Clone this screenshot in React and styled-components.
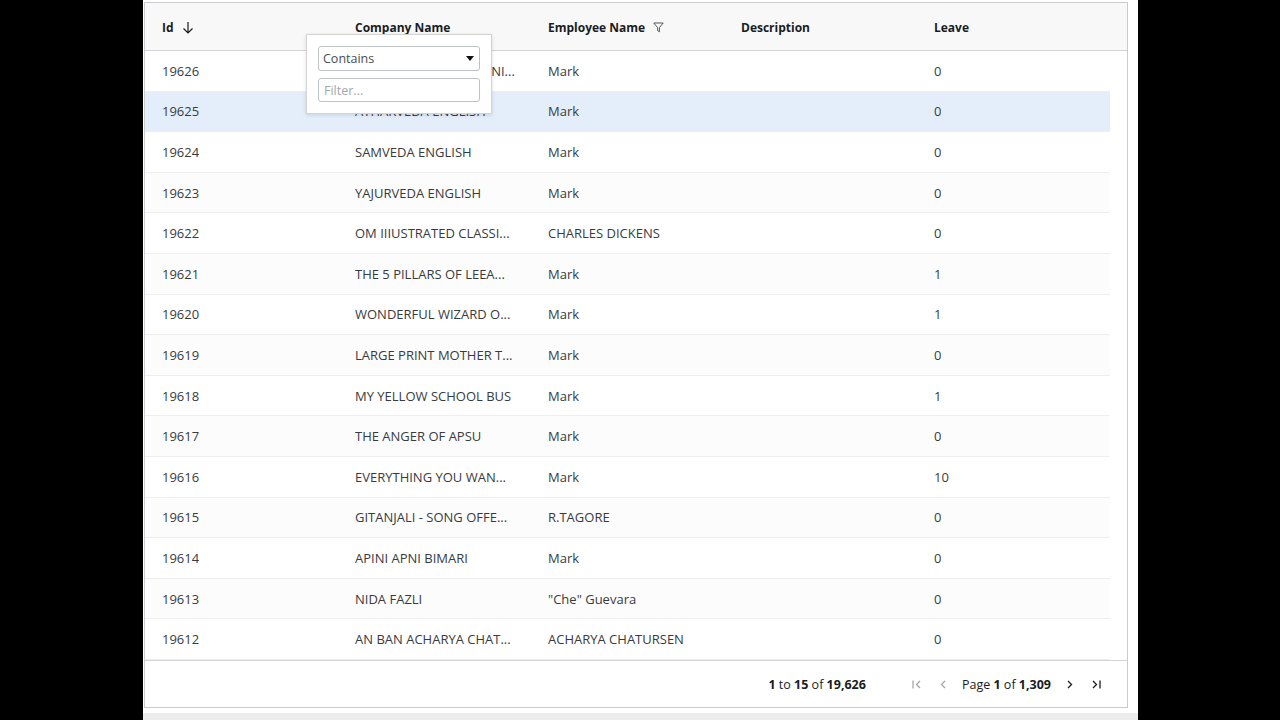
import React from "react";
import styled, { createGlobalStyle } from "styled-components";

const rows = [
  { id: 19626, company: "RIGVEDA SANSKRIT BANI...", employee: "Mark", leave: 0 },
  { id: 19625, company: "ATHARVEDA ENGLISH", employee: "Mark", leave: 0 },
  { id: 19624, company: "SAMVEDA ENGLISH", employee: "Mark", leave: 0 },
  { id: 19623, company: "YAJURVEDA ENGLISH", employee: "Mark", leave: 0 },
  { id: 19622, company: "OM IIIUSTRATED CLASSI...", employee: "CHARLES DICKENS", leave: 0 },
  { id: 19621, company: "THE 5 PILLARS OF LEEA...", employee: "Mark", leave: 1 },
  { id: 19620, company: "WONDERFUL WIZARD O...", employee: "Mark", leave: 1 },
  { id: 19619, company: "LARGE PRINT MOTHER T...", employee: "Mark", leave: 0 },
  { id: 19618, company: "MY YELLOW SCHOOL BUS", employee: "Mark", leave: 1 },
  { id: 19617, company: "THE ANGER OF APSU", employee: "Mark", leave: 0 },
  { id: 19616, company: "EVERYTHING YOU WAN...", employee: "Mark", leave: 10 },
  { id: 19615, company: "GITANJALI - SONG OFFE...", employee: "R.TAGORE", leave: 0 },
  { id: 19614, company: "APINI APNI BIMARI", employee: "Mark", leave: 0 },
  { id: 19613, company: "NIDA FAZLI", employee: "\"Che\" Guevara", leave: 0 },
  { id: 19612, company: "AN BAN ACHARYA CHAT...", employee: "ACHARYA CHATURSEN", leave: 0 },
];

const GlobalStyle = createGlobalStyle`
  html, body {
    margin: 0;
    padding: 0;
    background: #000;
    font-family: "Open Sans", "Liberation Sans", sans-serif;
  }
`;

const Sheet = styled.div`
  box-sizing: border-box;
  width: 995px;
  height: 720px;
  margin-left: 143px;
  padding: 2px 10px 0 1px;
  background: #fff;
  display: flex;
  flex-direction: column;
`;

const Grid = styled.div`
  position: relative;
  box-sizing: border-box;
  height: 706px;
  border: 1px solid #c9cbce;
  display: flex;
  flex-direction: column;
`;

const Header = styled.div`
  display: flex;
  height: 47px;
  flex-shrink: 0;
  background: #f8f8f8;
  border-bottom: 1px solid #d2d4d7;
`;

const HeaderCell = styled.div`
  box-sizing: border-box;
  width: 193px;
  padding: 2px 0 0 17px;
  display: flex;
  align-items: center;
  gap: 8px;
  font-size: 12px;
  font-weight: 700;
  color: #181d1f;
`;

const Body = styled.div`
  flex: 1;
  display: flex;
  flex-direction: column;
  padding-right: 17px;
`;

const Row = styled.div`
  display: flex;
  height: 40.6px;
  box-sizing: border-box;
  border-bottom: 1px solid #eeeeee;
  background: ${(p) => (p.$hover ? "#e3eefa" : p.$odd ? "#fcfcfc" : "#fff")};
`;

const Cell = styled.div`
  box-sizing: border-box;
  width: 193px;
  padding: 0 8px 0 17px;
  display: flex;
  align-items: center;
  font-size: 13px;
  color: #383b3e;
  white-space: nowrap;
  overflow: hidden;

  span {
    overflow: hidden;
    text-overflow: ellipsis;
  }
`;

const Footer = styled.div`
  height: 46px;
  flex-shrink: 0;
  border-top: 1px solid #d2d4d7;
  display: flex;
  align-items: center;
  justify-content: flex-end;
  padding-right: 24px;
  font-size: 12.5px;
  color: #181d1f;
`;

const Summary = styled.div`
  margin-right: 44px;
  b {
    font-weight: 700;
  }
`;

const PageNav = styled.div`
  display: flex;
  align-items: center;
  gap: 12px;
  b {
    font-weight: 700;
  }
`;

const NavButton = styled.span`
  display: inline-flex;
  width: 14px;
  justify-content: center;
  color: ${(p) => (p.$disabled ? "#a3a6a8" : "#181d1f")};
`;

const Strip = styled.div`
  margin-top: auto;
  height: 7px;
  margin-left: -1px;
  margin-right: -10px;
  background: #ececec;
`;

const FilterMenu = styled.div`
  position: absolute;
  left: 161px;
  top: 31px;
  box-sizing: border-box;
  width: 186px;
  height: 80px;
  padding: 11px 11px 0;
  background: #fff;
  border: 1px solid #d3d3d3;
  box-shadow: 0 1px 4px rgba(0, 0, 0, 0.12);
  display: flex;
  flex-direction: column;
  gap: 7px;
`;

const Select = styled.div`
  box-sizing: border-box;
  height: 25px;
  border: 1px solid #bfc2c5;
  border-radius: 3px;
  display: flex;
  align-items: center;
  justify-content: space-between;
  padding: 0 5px 0 4px;
  font-size: 12.5px;
  color: #4a4d50;
`;

const Caret = styled.span`
  width: 0;
  height: 0;
  border-left: 4px solid transparent;
  border-right: 4px solid transparent;
  border-top: 5px solid #111;
`;

const FilterInput = styled.input`
  box-sizing: border-box;
  height: 24px;
  border: 1px solid #bfc2c5;
  border-radius: 3px;
  padding: 0 5px;
  font-family: inherit;
  font-size: 12.5px;
  color: #333;
  outline: none;

  &::placeholder {
    color: #a4a7aa;
  }
`;

const SortDown = () => (
  <svg width="12" height="13" viewBox="0 0 12 13" fill="none" stroke="#181d1f" strokeWidth="1.2">
    <path d="M6 1v11M1.5 7.5L6 12l4.5-4.5" />
  </svg>
);

const Funnel = () => (
  <svg width="11" height="11" viewBox="0 0 11 11" fill="none" stroke="#555" strokeWidth="1">
    <path d="M0.8 1h9.4L6.4 5.6v4.2L4.6 8.6V5.6z" />
  </svg>
);

const Chevron = ({ dir = "right", bar = false }) => (
  <svg width="10" height="11" viewBox="0 0 10 11" fill="none" stroke="currentColor" strokeWidth="1.3">
    {dir === "left" ? (
      <>
        {bar && <path d="M1 1.5v8" />}
        <path d={bar ? "M8 2L4.5 5.5 8 9" : "M7 2L3.5 5.5 7 9"} />
      </>
    ) : (
      <>
        <path d={bar ? "M2 2l3.5 3.5L2 9" : "M3 2l3.5 3.5L3 9"} />
        {bar && <path d="M9 1.5v8" />}
      </>
    )}
  </svg>
);

const App = () => (
  <>
    <GlobalStyle />
    <Sheet>
      <Grid>
        <Header>
          <HeaderCell>
            Id <SortDown />
          </HeaderCell>
          <HeaderCell>Company Name</HeaderCell>
          <HeaderCell>
            Employee Name <Funnel />
          </HeaderCell>
          <HeaderCell>Description</HeaderCell>
          <HeaderCell>Leave</HeaderCell>
        </Header>
        <Body>
          {rows.map((r, i) => (
            <Row key={r.id} $odd={i % 2 === 1} $hover={i === 1}>
              <Cell>
                <span>{r.id}</span>
              </Cell>
              <Cell>
                <span>{r.company}</span>
              </Cell>
              <Cell>
                <span>{r.employee}</span>
              </Cell>
              <Cell />
              <Cell>
                <span>{r.leave}</span>
              </Cell>
            </Row>
          ))}
        </Body>
        <Footer>
          <Summary>
            <b>1</b> to <b>15</b> of <b>19,626</b>
          </Summary>
          <PageNav>
            <NavButton $disabled>
              <Chevron dir="left" bar />
            </NavButton>
            <NavButton $disabled>
              <Chevron dir="left" />
            </NavButton>
            <span>
              Page <b>1</b> of <b>1,309</b>
            </span>
            <NavButton>
              <Chevron />
            </NavButton>
            <NavButton>
              <Chevron bar />
            </NavButton>
          </PageNav>
        </Footer>
        <FilterMenu>
          <Select>
            Contains <Caret />
          </Select>
          <FilterInput placeholder="Filter..." />
        </FilterMenu>
      </Grid>
      <Strip />
    </Sheet>
  </>
);

export default App;
